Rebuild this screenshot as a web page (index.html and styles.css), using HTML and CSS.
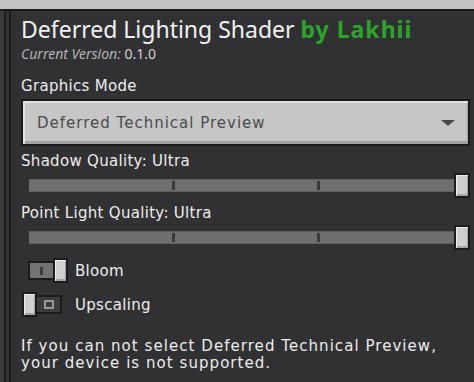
FILE: index.html
```html
<!DOCTYPE html>
<html>
<head>
<meta charset="utf-8">
<link rel="stylesheet" href="styles.css">
</head>
<body>
<div class="window">
  <div class="topbar"></div>
  <div class="body">
    <div class="sidebar"></div>
    <main class="content">
      <h1 class="title">Deferred Lighting Shader <span class="author">by Lakhii</span></h1>
      <p class="version"><em>Current Version:</em> 0.1.0</p>

      <div class="label label-first">Graphics Mode</div>
      <div class="dropdown">
        <span class="dropdown-text">Deferred Technical Preview</span>
        <span class="arrow"></span>
      </div>

      <div class="label">Shadow Quality: Ultra</div>
      <div class="slider">
        <div class="track"><i class="tick tick-1"></i><i class="tick tick-2"></i></div>
        <div class="thumb"></div>
      </div>

      <div class="label">Point Light Quality: Ultra</div>
      <div class="slider">
        <div class="track"><i class="tick tick-1"></i><i class="tick tick-2"></i></div>
        <div class="thumb"></div>
      </div>

      <div class="toggle-row toggle-row-first">
        <div class="toggle-slot">
          <div class="switch switch-on">
            <div class="sw-track sw-track-on"><i class="mark-on"></i></div>
            <div class="sw-thumb"></div>
          </div>
        </div>
        <span class="toggle-label">Bloom</span>
      </div>

      <div class="toggle-row">
        <div class="toggle-slot">
          <div class="switch switch-off">
            <div class="sw-thumb"></div>
            <div class="sw-track sw-track-off"><i class="mark-off"></i></div>
          </div>
        </div>
        <span class="toggle-label">Upscaling</span>
      </div>

      <p class="note">If you can not select Deferred Technical Preview,<br>your device is not supported.</p>
    </main>
  </div>
</div>
</body>
</html>
```

FILE: styles.css
```css
html, body {
  margin: 0;
  padding: 0;
  background: #313133;
}

.window {
  width: 474px;
  height: 382px;
  display: flex;
  flex-direction: column;
  overflow: hidden;
  background: #313133;
}

.topbar {
  height: 9px;
  background: #c4c4c4;
  border-bottom: 2px solid #1d1d1d;
  flex: none;
}

.body {
  flex: 1;
  display: flex;
}

.sidebar {
  width: 11px;
  flex: none;
  background: linear-gradient(to right,
    #3b3b3b 0, #3b3b3b 4px,
    #1f1f1f 4px, #1f1f1f 6px,
    #353535 6px, #353535 9px,
    #1a1a1a 9px, #1a1a1a 11px);
}

.content {
  flex: 1;
  padding: 5px 4px 0 10px;
  display: flex;
  flex-direction: column;
}

.title {
  margin: 0;
  font-family: "Noto Sans", "Open Sans", sans-serif;
  font-weight: 400;
  font-size: 23px;
  line-height: 27px;
  color: #f2f2f2;
  white-space: nowrap;
}

.author {
  font-weight: 700;
  color: #2aa52a;
  letter-spacing: 1px;
}

.version {
  margin: 3px 0 0 0;
  font-family: "Noto Sans", "Open Sans", sans-serif;
  font-size: 14px;
  line-height: 16px;
  color: #d2d2d2;
}

.version em {
  color: #b4b4b4;
}

.label,
.toggle-label,
.note,
.dropdown-text {
  font-family: "DejaVu Sans", sans-serif;
  font-size: 15px;
  letter-spacing: 0.3px;
  color: #ececec;
}

.label {
  line-height: 18px;
  margin-top: 6px;
  white-space: nowrap;
}

.label-first {
  margin-top: 15px;
}

.dropdown {
  margin-top: 4px;
  height: 43px;
  border: 2px solid #1b1b1b;
  background: #c6c6c6;
  box-shadow: inset 2px 2px 0 #e2e2e2, inset -1px -3px 0 #a2a2a2;
  display: flex;
  align-items: center;
  justify-content: space-between;
  padding: 0 13px 0 14px;
}

.dropdown-text {
  color: #4c4c4c;
  line-height: 18px;
  letter-spacing: 1px;
}

.arrow {
  width: 0;
  height: 0;
  border-left: 7px solid transparent;
  border-right: 7px solid transparent;
  border-top: 6px solid #4a4a4a;
}

.slider {
  margin: 3px 0 0 8px;
  height: 25px;
  display: flex;
  align-items: center;
}

.track {
  flex: 1;
  height: 13px;
  background: #6f6f6f;
  box-shadow: inset 0 1px 0 #5e5e5e, inset 0 -1px 0 #5e5e5e;
  position: relative;
}

.tick {
  position: absolute;
  top: 2px;
  width: 3px;
  height: 9px;
  background: #3a3a3a;
}

.tick-1 { left: calc((100% + 8px) / 3 - 1px); }
.tick-2 { left: calc((100% + 8px) * 2 / 3 - 1px); }

.thumb {
  width: 12px;
  height: 21px;
  flex: none;
  border: 2px solid #1c1c1c;
  background: #cfcfcf;
  box-shadow: inset 1px 1px 0 #ececec, inset -1px -2px 0 #a4a4a4;
}

.toggle-row {
  display: flex;
  align-items: center;
  height: 25px;
  margin-top: 8px;
}

.toggle-row + .toggle-row {
  margin-top: 9px;
}

.toggle-slot {
  width: 54px;
  flex: none;
  display: flex;
}

.switch {
  display: flex;
  align-items: center;
}

.switch-on { margin-left: 7px; }
.switch-off { margin-left: 1px; }

.sw-track {
  height: 15px;
  border: 2px solid #1c1c1c;
  display: flex;
  align-items: center;
  justify-content: center;
}

.sw-track-on {
  background: #737373;
  border-right: none;
  width: 23px;
}

.sw-track-off {
  background: #3c3c3c;
  border-left: none;
  width: 23px;
}

.mark-on {
  width: 3px;
  height: 8px;
  background: #3d3d3d;
}

.mark-off {
  width: 6px;
  height: 5px;
  border: 2px solid #9a9a9a;
  border-radius: 1px;
}

.sw-thumb {
  width: 11px;
  height: 21px;
  border: 2px solid #1c1c1c;
  background: #d0d0d0;
  box-shadow: inset 1px 1px 0 #eeeeee, inset -1px -2px 0 #a4a4a4;
}

.toggle-label {
  line-height: 18px;
}

.note {
  margin: 21px 0 0 0;
  line-height: 17px;
  letter-spacing: 1.05px;
  white-space: nowrap;
}
```
